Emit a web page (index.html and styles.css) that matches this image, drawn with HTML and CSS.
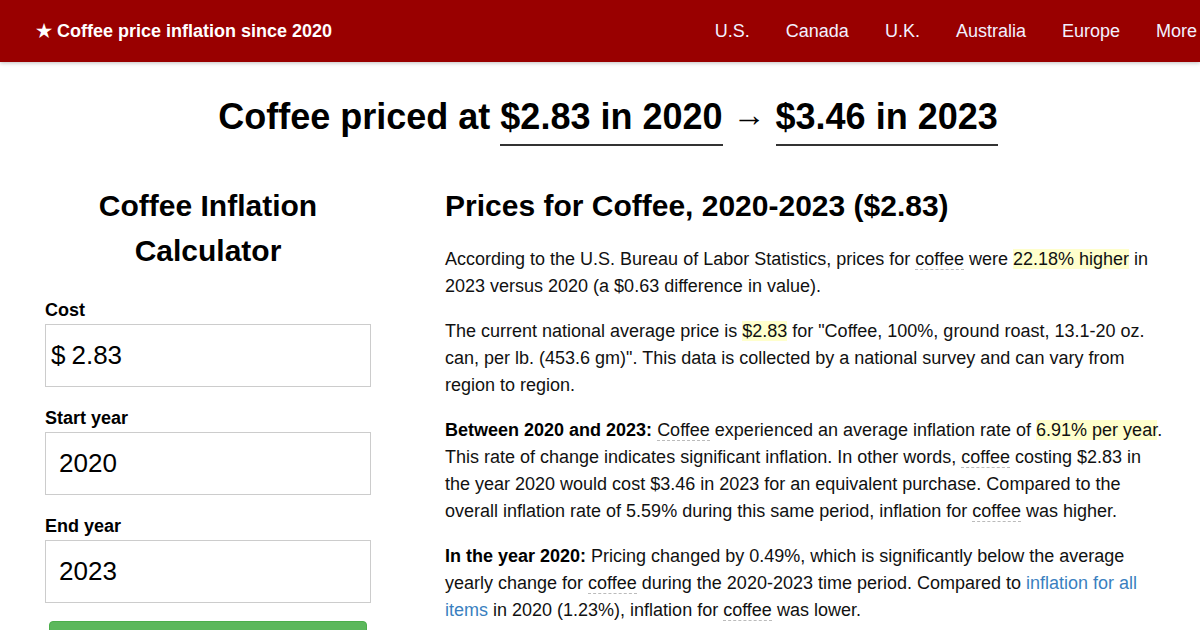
FILE: index.html
```html
<!DOCTYPE html>
<html lang="en">
<head>
<meta charset="utf-8">
<title>Coffee price inflation since 2020</title>
<link rel="stylesheet" href="styles.css">
</head>
<body>
<header class="topbar">
  <a class="brand" href="#">★ Coffee price inflation since 2020</a>
  <nav class="nav">
    <a href="#">U.S.</a>
    <a href="#">Canada</a>
    <a href="#">U.K.</a>
    <a href="#">Australia</a>
    <a href="#">Europe</a>
    <a href="#">More</a>
  </nav>
</header>

<h1 class="headline">Coffee priced at <span class="uline">$2.83 in 2020</span> <span class="arrow">→</span> <span class="uline">$3.46 in 2023</span></h1>

<main class="layout">
  <section class="calc">
    <h2 class="calc-title">Coffee Inflation Calculator</h2>
    <div class="field">
      <label class="label">Cost</label>
      <div class="box box-cost"><span class="prefix">$</span><span class="value">2.83</span></div>
    </div>
    <div class="field">
      <label class="label">Start year</label>
      <div class="box"><span class="value">2020</span></div>
    </div>
    <div class="field">
      <label class="label">End year</label>
      <div class="box"><span class="value">2023</span></div>
    </div>
    <button class="calc-btn" type="button">Calculate</button>
  </section>

  <section class="article">
    <h2 class="article-title">Prices for Coffee, 2020-2023 ($2.83)</h2>
    <p>According to the U.S. Bureau of Labor Statistics, prices for <span class="term">coffee</span> were <span class="hl">22.18% higher</span> in 2023 versus 2020 (a $0.63 difference in value).</p>
    <p>The current national average price is <span class="hl">$2.83</span> for "Coffee, 100%, ground roast, 13.1-20 oz. can, per lb. (453.6 gm)". This data is collected by a national survey and can vary from region to region.</p>
    <p><strong>Between 2020 and 2023:</strong> <span class="term">Coffee</span> experienced an average inflation rate of <span class="hl">6.91% per year</span>. This rate of change indicates significant inflation. In other words, <span class="term">coffee</span> costing $2.83 in the year 2020 would cost $3.46 in 2023 for an equivalent purchase. Compared to the overall inflation rate of 5.59% during this same period, inflation for <span class="term">coffee</span> was higher.</p>
    <p><strong>In the year 2020:</strong> Pricing changed by 0.49%, which is significantly below the average yearly change for <span class="term">coffee</span> during the 2020-2023 time period. Compared to <a class="link" href="#">inflation for all items</a> in 2020 (1.23%), inflation for <span class="term">coffee</span> was lower.</p>
  </section>
</main>
</body>
</html>
```

FILE: styles.css
```css
* { box-sizing: border-box; }

html, body {
  margin: 0;
  padding: 0;
  overflow: hidden;
}

body {
  font-family: "Liberation Sans", Arial, sans-serif;
  color: #111;
  background: #fff;
}

.topbar {
  height: 62px;
  background: #990000;
  display: flex;
  align-items: center;
  padding-left: 36px;
  box-shadow: 0 1px 4px rgba(0,0,0,0.25);
  white-space: nowrap;
}

.brand {
  color: #fff;
  font-weight: bold;
  font-size: 18px;
  text-decoration: none;
}

.nav {
  margin-left: auto;
  display: flex;
  gap: 36px;
  margin-right: 3px;
}

.nav a {
  color: #f2f0ff;
  font-size: 18px;
  text-decoration: none;
}

.headline {
  margin: 30px 0 0 16px;
  text-align: center;
  font-size: 36px;
  line-height: 46px;
  font-weight: bold;
  color: #000;
}

.uline {
  display: inline-block;
  border-bottom: 2px solid #333;
  padding-bottom: 7px;
  line-height: 40px;
}

.arrow {
  display: inline-block;
  font-size: 33px;
  font-weight: normal;
  padding: 0;
  vertical-align: 3px;
}

.layout {
  display: grid;
  grid-template-columns: 326px 725px;
  column-gap: 74px;
  padding-left: 45px;
  margin-top: 37px;
}

.calc-title {
  margin: 0 0 25px;
  text-align: center;
  font-size: 30px;
  line-height: 45px;
  font-weight: bold;
  color: #000;
}

.field {
  margin-bottom: 19px;
}

.label {
  display: block;
  font-size: 18px;
  font-weight: bold;
  line-height: 24px;
  margin-bottom: 2px;
  color: #000;
}

.box {
  height: 63px;
  border: 1px solid #ccc;
  display: flex;
  align-items: center;
  padding-left: 13px;
  font-size: 26px;
  color: #000;
}

.box-cost {
  padding-left: 5px;
}

.prefix {
  margin-right: 6px;
}

.calc-btn {
  display: block;
  width: 318px;
  height: 44px;
  margin: -1px 0 0 4px;
  background: #5cb85c;
  border: 1px solid #4cae4c;
  border-radius: 4px;
  color: #fff;
  font-size: 20px;
  font-family: inherit;
}

.article-title {
  margin: 0 0 18px;
  font-size: 30px;
  line-height: 45px;
  font-weight: bold;
  color: #000;
}

.article p {
  margin: 0 0 18px;
  font-size: 18px;
  line-height: 27px;
}

.article strong {
  color: #000;
}

.hl {
  background: #ffffcc;
}

.term {
  border-bottom: 1px dashed #bbb;
}

.link {
  color: #3a7fc0;
  text-decoration: none;
}
```
